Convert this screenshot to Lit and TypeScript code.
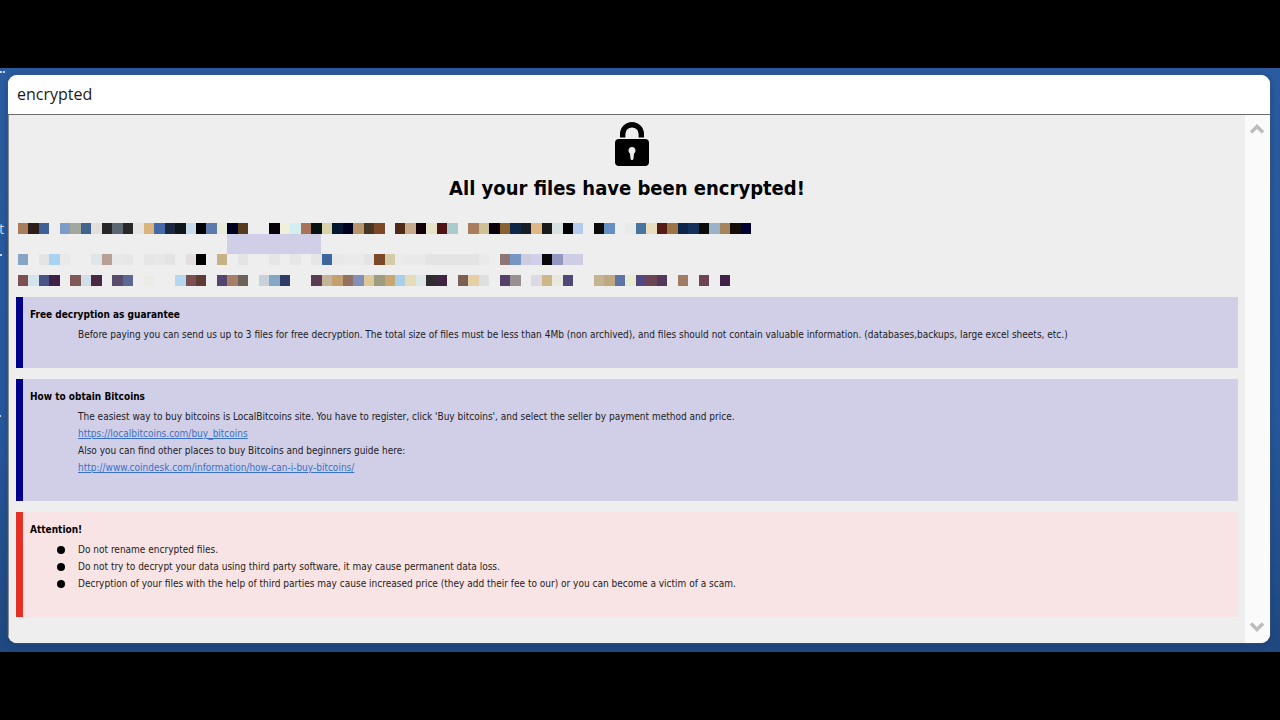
import { LitElement, html, css, nothing } from "lit";
import { customElement, property } from "lit/decorators.js";

type Cells = Record<number, string>;

const COLUMNS = 70;

const rowOne: Cells = {
  0: "#a87d5c", 1: "#2e1d18", 2: "#3f6096", 4: "#7c9bc6", 5: "#a3a79f", 6: "#3f648e", 7: "#e2dfde",
  8: "#262626", 9: "#5d6673", 10: "#282828", 11: "#e8e4e3", 12: "#dcb37a", 13: "#4468a8", 14: "#1b2840",
  15: "#0e151d", 16: "#c8dbea", 17: "#000000", 18: "#5a7bab", 19: "#e8ebd8", 20: "#000022", 21: "#543c1c",
  24: "#08000a", 25: "#f0efdc", 26: "#d3eeee", 27: "#a87358", 28: "#061313", 29: "#d9d3ac", 30: "#061830",
  31: "#000020", 32: "#b8956a", 33: "#463624", 34: "#7c4828", 36: "#502a14", 37: "#c8a98c", 38: "#120008",
  39: "#e6e4c6", 40: "#501416", 41: "#abcaca", 43: "#a87c5c", 44: "#cdc195", 45: "#0a0008", 46: "#8a6230",
  47: "#102848", 48: "#181c24", 49: "#e0b884", 50: "#1a1a1a", 51: "#d8e0e2", 52: "#000000", 53: "#b4cbec",
  55: "#0c0c0c", 56: "#6690c4", 58: "#e8eaea", 59: "#4a74a0", 60: "#e6debc", 61: "#541c14", 62: "#9c7448",
  63: "#0e2448", 64: "#14305c", 65: "#0a0a08", 66: "#9cb2c8", 67: "#a8845c", 68: "#140e08", 69: "#000030",
};

const rowTwo: Cells = {
  0: "#88a4c4", 2: "#e4e4e4", 3: "#a8d2f0", 4: "#e9e9e9", 7: "#e0e5e8", 8: "#b8a096", 9: "#e8e8e8",
  10: "#e6e6e6", 12: "#e6e6e6", 13: "#e8e8e8", 14: "#e4e4e4", 16: "#e3dfdf", 17: "#000000", 19: "#c8b088",
  21: "#e4e4e4", 24: "#e4e6e7", 26: "#e6e6e6", 28: "#e4e6e8", 29: "#3c689c", 30: "#e8e8ea", 31: "#eaeaea",
  32: "#eaeaea", 33: "#e4e4e6", 34: "#7c4828", 35: "#d4cca8", 36: "#eaeaea", 37: "#e9e9e9", 38: "#e9e9e9",
  39: "#e4e4e4", 40: "#e4e4e4", 41: "#e4e4e4", 42: "#e4e4e4", 43: "#e4e4e4", 44: "#eaeaea", 46: "#8e7676",
  47: "#7894c4", 48: "#cccde0", 49: "#d0d0ea", 50: "#080808", 51: "#9498c0", 52: "#cfcce6", 53: "#cfcce6",
};

const rowThree: Cells = {
  0: "#7c5050", 1: "#d4e4ec", 2: "#485488", 3: "#402048", 5: "#805858", 6: "#d0e0e8", 7: "#482844",
  9: "#584c6c", 10: "#5c6894", 12: "#ecebe6", 15: "#b4d8f0", 16: "#7c5050", 17: "#5c3c34", 19: "#544470",
  20: "#a48068", 21: "#6c645c", 23: "#c8d0d8", 24: "#84a8c4", 25: "#303c68", 28: "#5c3c50", 29: "#c4b498",
  30: "#c4a070", 31: "#947060", 32: "#8090b8", 33: "#dcc898", 34: "#9c9c80", 35: "#c8a870", 36: "#a8d0e8",
  37: "#e8dcb8", 38: "#dce8e8", 39: "#302c30", 40: "#402444", 42: "#7c6054", 43: "#e4d0a4", 44: "#dce0e0",
  46: "#544068", 47: "#989090", 49: "#dcd8e4", 50: "#ccb888", 51: "#e8e8dc", 52: "#504878", 55: "#c4b494",
  56: "#c0a880", 57: "#5c74a8", 58: "#e8ecd0", 59: "#544880", 60: "#6c4454", 61: "#54385c", 63: "#a07c64",
  65: "#6c4454", 67: "#402048",
};

/** A line whose contents are hidden behind a strip of coloured blocks. */
@customElement("mosaic-row")
export class MosaicRow extends LitElement {
  static styles = css`
    :host {
      display: grid;
      grid-template-columns: repeat(70, 1fr);
      width: 733px;
      max-width: 100%;
      height: 11px;
    }
  `;

  @property({ attribute: false }) cells: Cells = {};

  render() {
    return Array.from({ length: COLUMNS }, (_, i) =>
      this.cells[i] ? html`<span style="background:${this.cells[i]}"></span>` : html`<span></span>`
    );
  }
}

@customElement("note-panel")
export class NotePanel extends LitElement {
  static styles = css`
    :host {
      display: block;
      padding: 9px 7px 25px;
      border-left: 7px solid #00008b;
      background: #d0cfe7;
      color: #1c1c24;
    }
    :host([warning]) {
      border-left-color: #e33126;
      background: #f8e4e4;
      color: #241c1c;
    }
    .title {
      margin: 0 0 2px;
      font-size: 10px;
      line-height: 18px;
      font-weight: bold;
      color: #000;
    }
    .body {
      padding-left: 48px;
      font-size: 10px;
      line-height: 17px;
    }
  `;

  @property() heading = "";
  @property({ type: Boolean, reflect: true }) warning = false;

  render() {
    return html`
      ${this.heading ? html`<h2 class="title">${this.heading}</h2>` : nothing}
      <div class="body"><slot></slot></div>
    `;
  }
}

@customElement("app-root")
export class AppRoot extends LitElement {
  static styles = css`
    :host {
      display: flex;
      flex-direction: column;
      box-sizing: border-box;
      min-height: 100vh;
      padding: 68px 0;
      background: #000;
      font-family: "DejaVu Sans Condensed", "DejaVu Sans", sans-serif;
    }
    .desktop {
      position: relative;
      flex: 1;
      display: flex;
      padding: 7px 10px 9px 8px;
      background: linear-gradient(#2a5b9f, #25579a 60%, #20487f);
    }
    .behind {
      position: absolute;
      left: 0;
      color: #c4d4ea;
      font: 15px/20px "Open Sans", sans-serif;
    }
    .letter { top: 150px; left: -1px; }
    .speck {
      width: 2px;
      height: 2px;
      background: #c4d4ea;
    }
    .dot-one { top: 3px; }
    .dot-two { top: 3px; left: 3px; }
    .dash { top: 186px; }
    .point { top: 347px; width: 1px; }
    .window {
      position: relative;
      flex: 1;
      min-width: 0;
      display: flex;
      flex-direction: column;
      overflow: hidden;
      border-radius: 9px;
      background: #eee;
      box-shadow: 0 0 2px #667c90, 0 1px 5px #17386a;
    }
    .titlebar {
      padding: 7px 9px 8px;
      border-bottom: 1px solid #6c6c6c;
      background: #fff;
      color: #1a1a1a;
      font: 16px/24px "Open Sans", sans-serif;
    }
    .view {
      flex: 1;
      display: flex;
      padding-right: 1px;
      border-left: 1px solid #8a8a8a;
      background: #fafafa;
    }
    .page {
      flex: 1;
      min-width: 0;
      padding: 6px 7px 0;
      background: #eee;
    }
    .banner {
      display: flex;
      flex-direction: column;
      align-items: center;
    }
    .lock {
      display: block;
      margin-left: 10px;
    }
    .headline {
      margin: 6px 0 20px;
      font-size: 20px;
      line-height: 30px;
      font-weight: bold;
      color: #000;
    }
    .redacted {
      display: flex;
      flex-direction: column;
      padding: 0 2px 11px;
    }
    .highlight {
      width: 94px;
      height: 20px;
      margin-left: 209px;
      background: #d0cfe7;
    }
    .last { margin-top: 10px; }
    .panels {
      display: flex;
      flex-direction: column;
      gap: 11px;
    }
    .panels p { margin: 0; }
    .panels a { color: #3a70c8; text-decoration: underline; }
    .rules {
      margin: 0;
      padding: 0;
      list-style: none;
    }
    .rules li {
      display: flex;
      align-items: center;
    }
    .rules li::before {
      content: "";
      width: 8px;
      height: 8px;
      margin: 0 13px 0 -21px;
      border-radius: 50%;
      background: #000;
    }
    .scrollbar {
      display: flex;
      flex-direction: column;
      justify-content: space-between;
      width: 24px;
    }
    .arrow {
      display: flex;
      justify-content: center;
      padding: 8px 0 10px;
      border: 0;
      background: none;
    }
  `;

  render() {
    return html`
      <div class="desktop">
        <span class="behind speck dot-one"></span>
        <span class="behind speck dot-two"></span>
        <span class="behind letter">t</span>
        <span class="behind speck dash"></span>
        <span class="behind speck point"></span>
        <main class="window">
          <header class="titlebar">encrypted</header>
          <div class="view">
            <div class="page">
              <div class="banner">
                <svg class="lock" width="36" height="46" viewBox="0 0 36 46" aria-hidden="true">
                  <path d="M8.700 16.500V13a9.300 9.300 0 0 1 18.600 0V16.500" fill="none" stroke="#000" stroke-width="5.400" />
                  <rect x="1" y="18" width="34" height="27" rx="4" fill="#000" />
                  <path d="M18 26a3.500 3.500 0 0 1 2 6.400l-.5 5.100a1.500 1.500 0 0 1-3 0L16 32.400a3.500 3.500 0 0 1 2-6.400z" fill="#eee" />
                </svg>
                <h1 class="headline">All your files have been encrypted!</h1>
              </div>
              <div class="redacted">
                <mosaic-row .cells=${rowOne}></mosaic-row>
                <div class="highlight"></div>
                <mosaic-row .cells=${rowTwo}></mosaic-row>
                <mosaic-row class="last" .cells=${rowThree}></mosaic-row>
              </div>
              <div class="panels">
                <note-panel heading="Free decryption as guarantee">
                  <p>Before paying you can send us up to 3 files for free decryption. The total size of files must be less than 4Mb (non archived), and files should not contain valuable information. (databases,backups, large excel sheets, etc.)</p>
                </note-panel>
                <note-panel heading="How to obtain Bitcoins">
                  <p>The easiest way to buy bitcoins is LocalBitcoins site. You have to register, click 'Buy bitcoins', and select the seller by payment method and price.</p>
                  <p><a href="https://localbitcoins.com/buy_bitcoins">https://localbitcoins.com/buy_bitcoins</a></p>
                  <p>Also you can find other places to buy Bitcoins and beginners guide here:</p>
                  <p><a href="http://www.coindesk.com/information/how-can-i-buy-bitcoins/">http://www.coindesk.com/information/how-can-i-buy-bitcoins/</a></p>
                </note-panel>
                <note-panel heading="Attention!" warning>
                  <ul class="rules">
                    <li>Do not rename encrypted files.</li>
                    <li>Do not try to decrypt your data using third party software, it may cause permanent data loss.</li>
                    <li>Decryption of your files with the help of third parties may cause increased price (they add their fee to our) or you can become a victim of a scam.</li>
                  </ul>
                </note-panel>
              </div>
            </div>
            <div class="scrollbar">
              <button class="arrow" aria-label="Scroll up">
                <svg width="14" height="12" viewBox="0 0 14 12"><path d="M1 9.500L7 3.500l6 6" fill="none" stroke="#bdbdbd" stroke-width="3.400" /></svg>
              </button>
              <button class="arrow" aria-label="Scroll down">
                <svg width="14" height="12" viewBox="0 0 14 12"><path d="M1 2.500L7 8.500l6-6" fill="none" stroke="#bdbdbd" stroke-width="3.400" /></svg>
              </button>
            </div>
          </div>
        </main>
      </div>
    `;
  }
}
